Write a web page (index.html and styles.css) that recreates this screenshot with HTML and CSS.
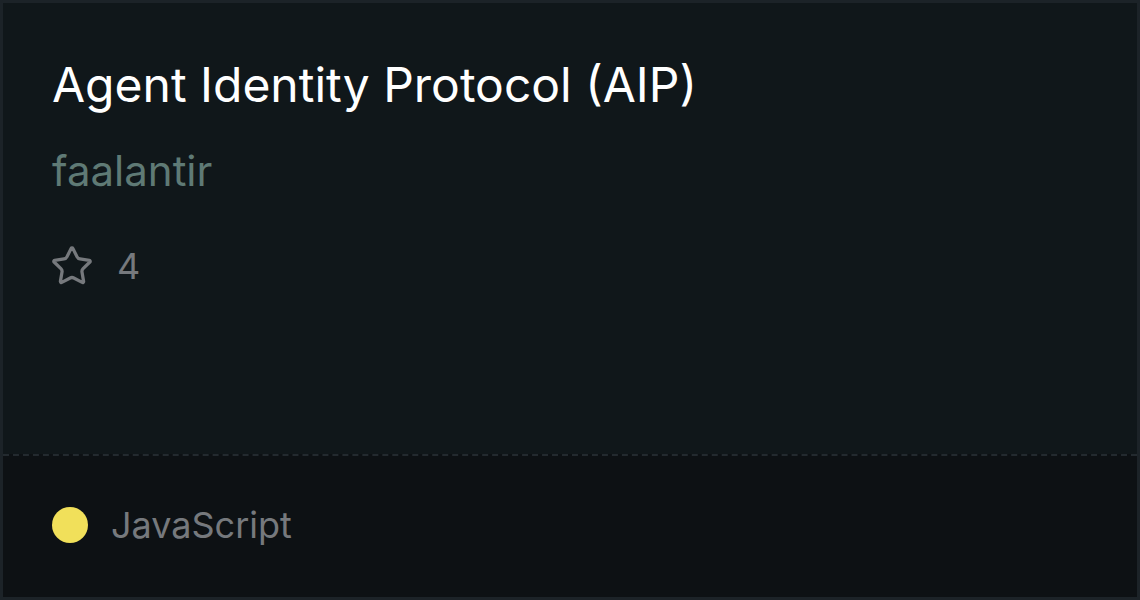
FILE: index.html
```html
<!DOCTYPE html>
<html lang="en">

<head>
    <meta charset="UTF-8">
    <meta name="viewport" content="width=device-width, initial-scale=1.0">
    <title>Agent Identity Protocol (AIP)</title>
    <link rel="stylesheet" href="styles.css">
</head>

<body>
    <div class="repo-card">
        <div class="repo-body">
            <h1 class="repo-title">Agent Identity Protocol (AIP)</h1>
            <p class="repo-owner">faalantir</p>
            <div class="repo-stars">
                <svg class="star-icon" viewBox="1 1 22 22" width="40" height="40">
                    <path d="M11.525 2.295a.53.53 0 0 1 .95 0l2.31 4.679a2.123 2.123 0 0 0 1.595 1.16l5.166.756a.53.53 0 0 1 .294.904l-3.736 3.638a2.123 2.123 0 0 0-.611 1.878l.882 5.14a.53.53 0 0 1-.771.56l-4.618-2.428a2.122 2.122 0 0 0-1.973 0L6.396 21.01a.53.53 0 0 1-.77-.56l.881-5.139a2.122 2.122 0 0 0-.611-1.879L2.16 9.795a.53.53 0 0 1 .294-.906l5.165-.755a2.122 2.122 0 0 0 1.597-1.16z"
                        fill="none" stroke="currentColor" stroke-width="1.8" stroke-linejoin="round" />
                </svg>
                <span class="star-count">4</span>
            </div>
        </div>
        <div class="repo-footer">
            <span class="lang-dot"></span>
            <span class="lang-name">JavaScript</span>
        </div>
    </div>
</body>

</html>
```

FILE: styles.css
```css
body {
    margin: 0;
    padding: 0;
    background-color: #1c2328;
    font-family: Inter, "Noto Sans", sans-serif;
}

.repo-card {
    box-sizing: border-box;
    width: 1140px;
    height: 600px;
    border: 3px solid #1c2328;
    display: flex;
    flex-direction: column;
    background-color: #10171a;
}

.repo-body {
    flex: 1;
    padding: 53px 49px 0;
}

.repo-title {
    margin: 0;
    color: #ffffff;
    font-size: 48px;
    font-weight: 400;
    line-height: 58px;
}

.repo-owner {
    margin: 31px 0 0;
    color: #5f7a75;
    font-size: 42px;
    line-height: 52px;
}

.repo-stars {
    display: flex;
    align-items: center;
    gap: 25px;
    margin-top: 47px;
    height: 44px;
    color: #76797d;
}

.star-count {
    font-size: 36px;
    line-height: 44px;
}

.repo-footer {
    height: 137px;
    flex: none;
    border-top: 2px dashed #232a2f;
    background-color: #0d1114;
    display: flex;
    align-items: center;
    padding: 0 49px 4px;
    gap: 23px;
}

.lang-dot {
    width: 36px;
    height: 36px;
    border-radius: 50%;
    background-color: #f1e05a;
}

.lang-name {
    color: #76797d;
    font-size: 36px;
    line-height: 44px;
}
```
